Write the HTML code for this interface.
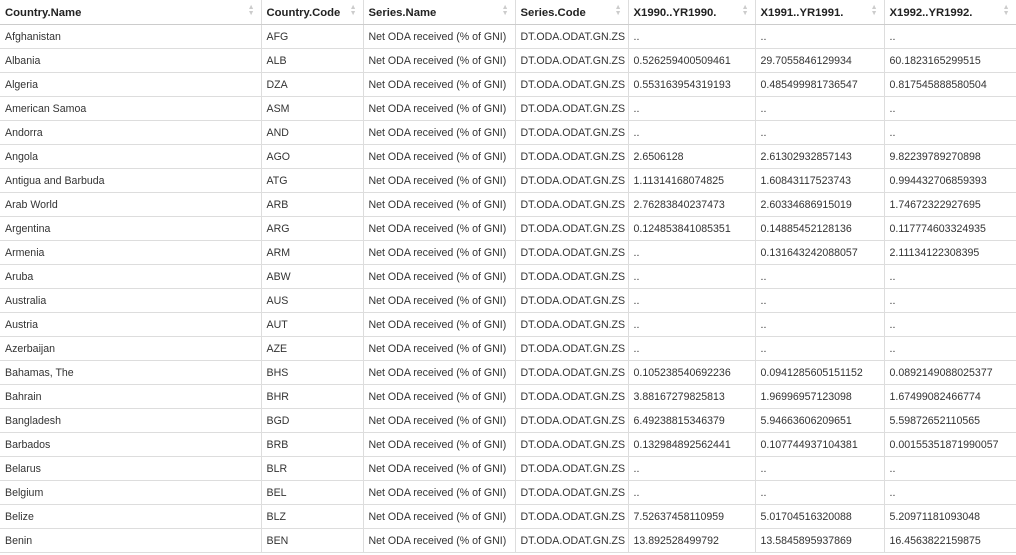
<!DOCTYPE html><html><head><style>
body{margin:0;background:#fff;width:1016px;height:555px;overflow:hidden;font-family:"Liberation Sans",Arial,sans-serif;}
table{border-collapse:collapse;table-layout:fixed;position:absolute;left:0;top:0;width:1016px}
td,th{height:23px;padding:0 0 0 5px;border-right:1px solid #ddd;border-bottom:1px solid #ddd;font-size:10.6px;color:#333;white-space:nowrap;overflow:hidden;text-align:left}
th{height:23px;font-weight:bold;color:#222;font-size:11.3px;position:relative;border-bottom:1px solid #ccc}
th span{position:absolute;right:6px;top:5px;color:#ccc;font-size:7px;line-height:6px;font-weight:normal}
tr:first-child th{padding-top:1px}
</style></head><body>
<table>
<colgroup><col style="width:261px"><col style="width:102px"><col style="width:152px"><col style="width:113px"><col style="width:127px"><col style="width:129px"><col style="width:132px"></colgroup>
<tr><th>Country.Name<span>▲<br>▼</span></th><th>Country.Code<span>▲<br>▼</span></th><th>Series.Name<span>▲<br>▼</span></th><th>Series.Code<span>▲<br>▼</span></th><th>X1990..YR1990.<span>▲<br>▼</span></th><th>X1991..YR1991.<span>▲<br>▼</span></th><th>X1992..YR1992.<span>▲<br>▼</span></th></tr>
<tr><td>Afghanistan</td><td>AFG</td><td>Net ODA received (% of GNI)</td><td>DT.ODA.ODAT.GN.ZS</td><td>..</td><td>..</td><td>..</td></tr>
<tr><td>Albania</td><td>ALB</td><td>Net ODA received (% of GNI)</td><td>DT.ODA.ODAT.GN.ZS</td><td>0.526259400509461</td><td>29.7055846129934</td><td>60.1823165299515</td></tr>
<tr><td>Algeria</td><td>DZA</td><td>Net ODA received (% of GNI)</td><td>DT.ODA.ODAT.GN.ZS</td><td>0.553163954319193</td><td>0.485499981736547</td><td>0.817545888580504</td></tr>
<tr><td>American Samoa</td><td>ASM</td><td>Net ODA received (% of GNI)</td><td>DT.ODA.ODAT.GN.ZS</td><td>..</td><td>..</td><td>..</td></tr>
<tr><td>Andorra</td><td>AND</td><td>Net ODA received (% of GNI)</td><td>DT.ODA.ODAT.GN.ZS</td><td>..</td><td>..</td><td>..</td></tr>
<tr><td>Angola</td><td>AGO</td><td>Net ODA received (% of GNI)</td><td>DT.ODA.ODAT.GN.ZS</td><td>2.6506128</td><td>2.61302932857143</td><td>9.82239789270898</td></tr>
<tr><td>Antigua and Barbuda</td><td>ATG</td><td>Net ODA received (% of GNI)</td><td>DT.ODA.ODAT.GN.ZS</td><td>1.11314168074825</td><td>1.60843117523743</td><td>0.994432706859393</td></tr>
<tr><td>Arab World</td><td>ARB</td><td>Net ODA received (% of GNI)</td><td>DT.ODA.ODAT.GN.ZS</td><td>2.76283840237473</td><td>2.60334686915019</td><td>1.74672322927695</td></tr>
<tr><td>Argentina</td><td>ARG</td><td>Net ODA received (% of GNI)</td><td>DT.ODA.ODAT.GN.ZS</td><td>0.124853841085351</td><td>0.14885452128136</td><td>0.117774603324935</td></tr>
<tr><td>Armenia</td><td>ARM</td><td>Net ODA received (% of GNI)</td><td>DT.ODA.ODAT.GN.ZS</td><td>..</td><td>0.131643242088057</td><td>2.11134122308395</td></tr>
<tr><td>Aruba</td><td>ABW</td><td>Net ODA received (% of GNI)</td><td>DT.ODA.ODAT.GN.ZS</td><td>..</td><td>..</td><td>..</td></tr>
<tr><td>Australia</td><td>AUS</td><td>Net ODA received (% of GNI)</td><td>DT.ODA.ODAT.GN.ZS</td><td>..</td><td>..</td><td>..</td></tr>
<tr><td>Austria</td><td>AUT</td><td>Net ODA received (% of GNI)</td><td>DT.ODA.ODAT.GN.ZS</td><td>..</td><td>..</td><td>..</td></tr>
<tr><td>Azerbaijan</td><td>AZE</td><td>Net ODA received (% of GNI)</td><td>DT.ODA.ODAT.GN.ZS</td><td>..</td><td>..</td><td>..</td></tr>
<tr><td>Bahamas, The</td><td>BHS</td><td>Net ODA received (% of GNI)</td><td>DT.ODA.ODAT.GN.ZS</td><td>0.105238540692236</td><td>0.0941285605151152</td><td>0.0892149088025377</td></tr>
<tr><td>Bahrain</td><td>BHR</td><td>Net ODA received (% of GNI)</td><td>DT.ODA.ODAT.GN.ZS</td><td>3.88167279825813</td><td>1.96996957123098</td><td>1.67499082466774</td></tr>
<tr><td>Bangladesh</td><td>BGD</td><td>Net ODA received (% of GNI)</td><td>DT.ODA.ODAT.GN.ZS</td><td>6.49238815346379</td><td>5.94663606209651</td><td>5.59872652110565</td></tr>
<tr><td>Barbados</td><td>BRB</td><td>Net ODA received (% of GNI)</td><td>DT.ODA.ODAT.GN.ZS</td><td>0.132984892562441</td><td>0.107744937104381</td><td>0.00155351871990057</td></tr>
<tr><td>Belarus</td><td>BLR</td><td>Net ODA received (% of GNI)</td><td>DT.ODA.ODAT.GN.ZS</td><td>..</td><td>..</td><td>..</td></tr>
<tr><td>Belgium</td><td>BEL</td><td>Net ODA received (% of GNI)</td><td>DT.ODA.ODAT.GN.ZS</td><td>..</td><td>..</td><td>..</td></tr>
<tr><td>Belize</td><td>BLZ</td><td>Net ODA received (% of GNI)</td><td>DT.ODA.ODAT.GN.ZS</td><td>7.52637458110959</td><td>5.01704516320088</td><td>5.20971181093048</td></tr>
<tr><td>Benin</td><td>BEN</td><td>Net ODA received (% of GNI)</td><td>DT.ODA.ODAT.GN.ZS</td><td>13.892528499792</td><td>13.5845895937869</td><td>16.4563822159875</td></tr>
</table>
</body></html>
